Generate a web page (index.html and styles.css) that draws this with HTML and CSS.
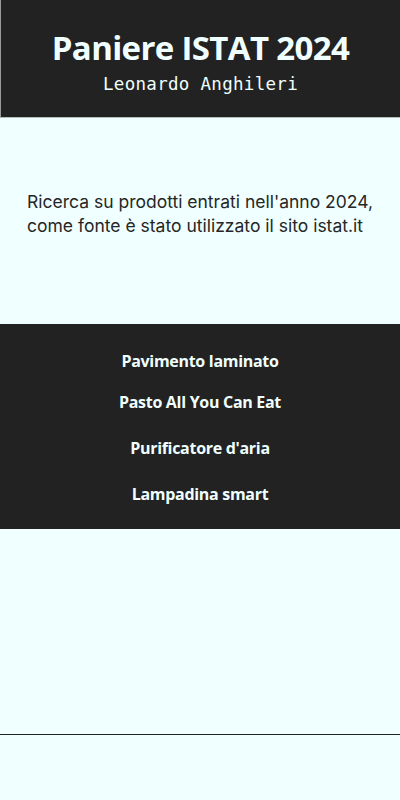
FILE: index.html
```html
<!DOCTYPE html>
<html lang="it">
<head>
<meta charset="utf-8">
<title>Paniere ISTAT 2024</title>
<link rel="stylesheet" href="styles.css">
</head>
<body>
<header class="site-header">
  <h1 class="title">Paniere ISTAT 2024</h1>
  <p class="author">Leonardo Anghileri</p>
</header>
<section class="intro">
  <p class="intro-text">Ricerca su prodotti entrati nell'anno 2024, come fonte è stato utilizzato il sito istat.it</p>
</section>
<nav class="products">
  <a class="product first">Pavimento laminato</a>
  <a class="product">Pasto All You Can Eat</a>
  <a class="product">Purificatore d'aria</a>
  <a class="product">Lampadina smart</a>
</nav>
<div class="spacer"></div>
<footer class="site-footer"></footer>
</body>
</html>
```
FILE: styles.css
```css
* { box-sizing: border-box; }
html, body { margin: 0; padding: 0; }
body {
  background: #f0ffff;
  color: #222;
  font-family: "Open Sans", sans-serif;
}
.site-header {
  background: #222222;
  color: #f0ffff;
  height: 118px;
  border-left: 1px solid #9a9a9a;
  border-bottom: 1px solid #b8bcbc;
  display: flex;
  flex-direction: column;
  align-items: center;
  padding-top: 26px;
}
.title {
  margin: 0;
  font-family: "Open Sans", sans-serif;
  font-weight: 700;
  font-size: 33px;
  line-height: 44px;
  letter-spacing: -0.65px;
}
.author {
  margin: 2px 0 0;
  font-family: "DejaVu Sans Mono", monospace;
  font-size: 17.5px;
  line-height: 24px;
  letter-spacing: 0.3px;
}
.intro {
  height: 206px;
  display: flex;
  align-items: center;
  padding: 0 27px 14px;
}
.intro-text {
  margin: 0;
  font-family: "Inter", sans-serif;
  font-size: 17.5px;
  line-height: 24px;
  color: #262626;
}
.products {
  background: #222222;
  height: 205px;
  display: flex;
  flex-direction: column;
  align-items: center;
  padding-top: 26px;
}
.product {
  color: #f0ffff;
  font-family: "Open Sans", sans-serif;
  font-weight: 700;
  font-size: 16px;
  line-height: 22px;
  margin-top: 24px;
  letter-spacing: -0.3px;
}
.product.first { margin-top: 0; margin-bottom: -5px; }
.spacer { height: 205px; }
.site-footer {
  border-top: 1px solid #222;
  height: 66px;
}
```
